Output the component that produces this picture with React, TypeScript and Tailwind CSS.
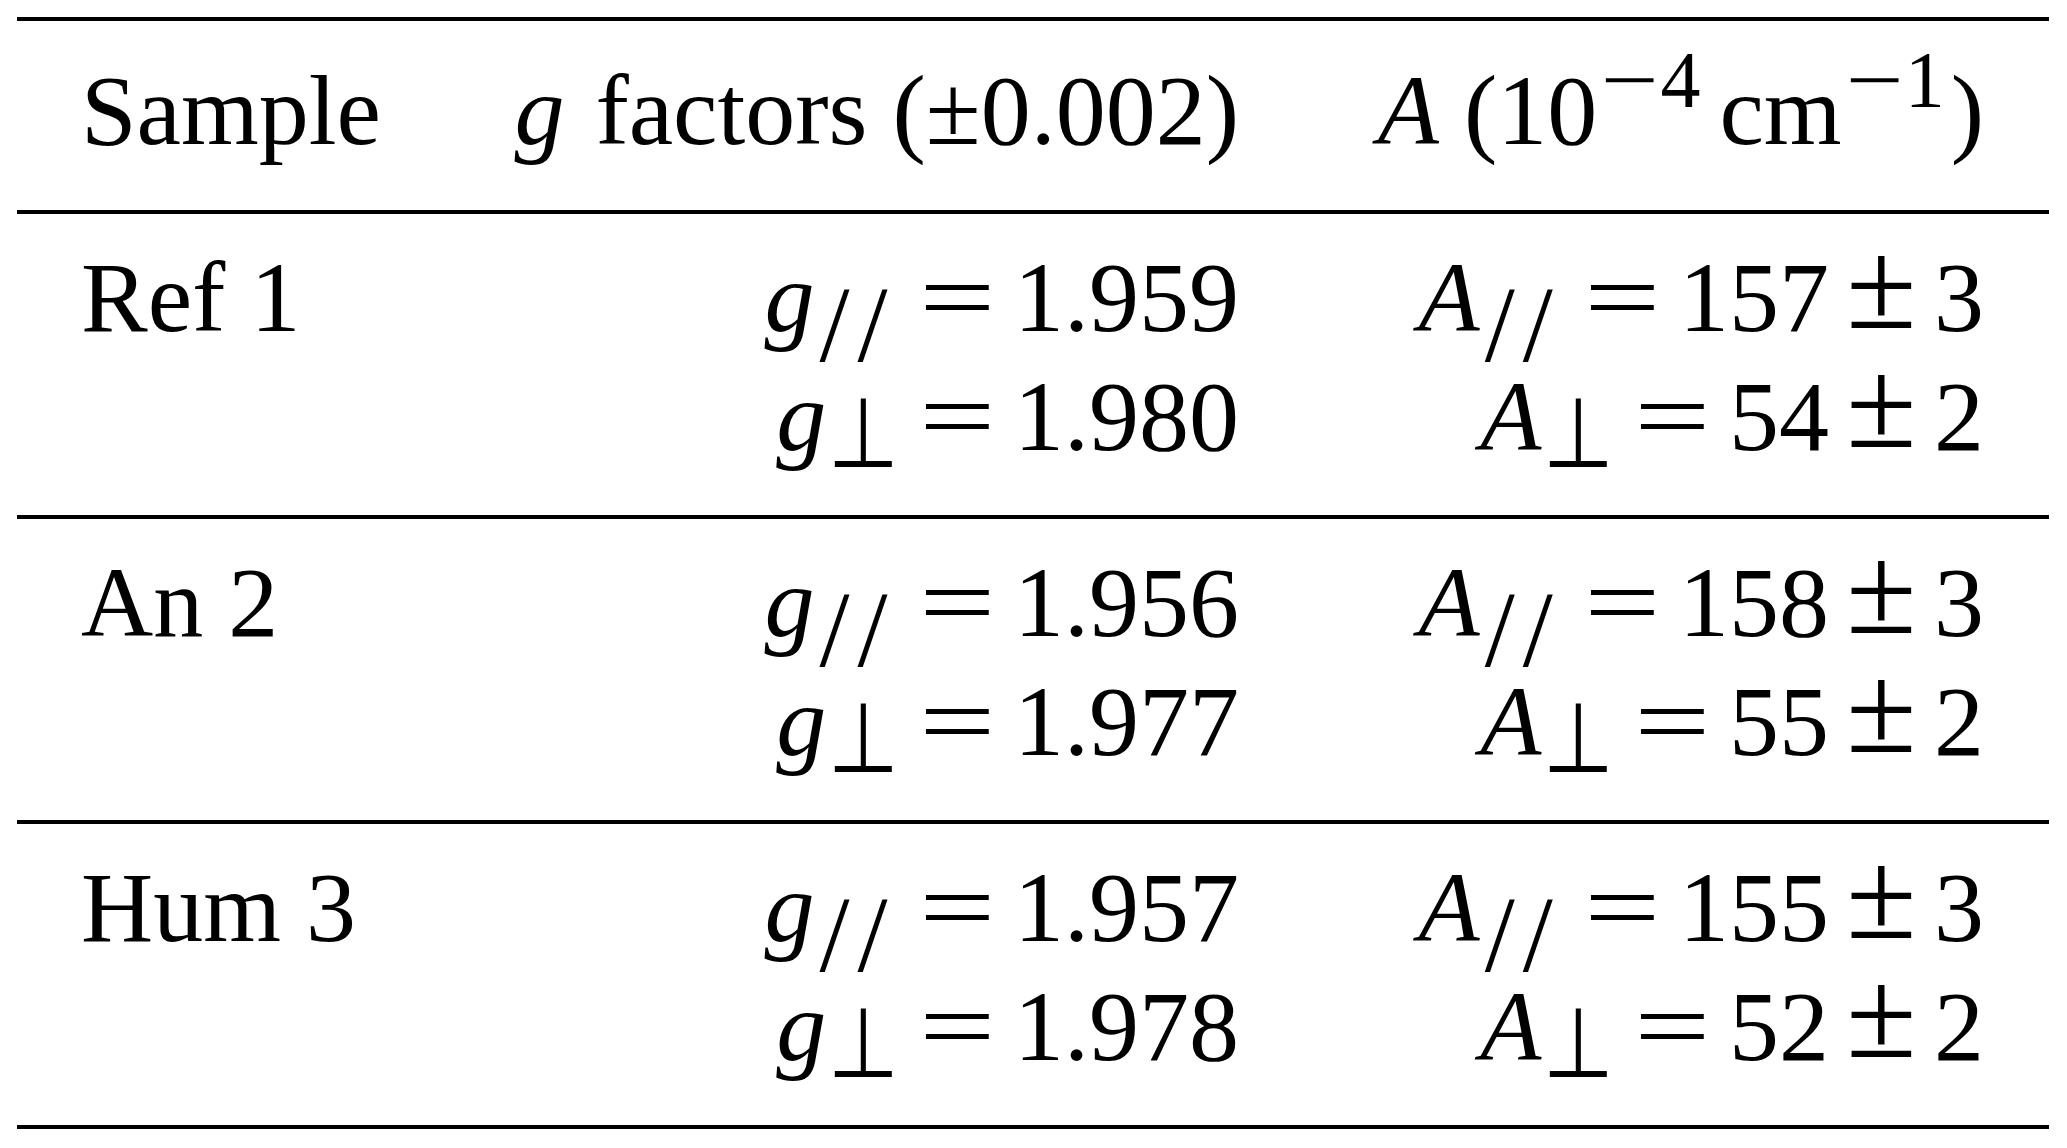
const rows = [
  { name: "Ref 1", g: ["1.959", "1.980"], a: [["157", "3"], ["54", "2"]] },
  { name: "An 2", g: ["1.956", "1.977"], a: [["158", "3"], ["55", "2"]] },
  { name: "Hum 3", g: ["1.957", "1.978"], a: [["155", "3"], ["52", "2"]] },
];

function Rule() {
  return <div className="h-[4px] bg-black" />;
}

function Par() {
  return <span className="ml-[5px] align-[-30px] text-[108px] leading-[0] tracking-[8px]">//</span>;
}

function Perp() {
  return (
    <span className="ml-[5px] inline-block origin-bottom scale-x-[1.1] scale-y-[1.32] align-[-9px] font-['DejaVu_Sans',sans-serif] text-[74px] leading-[0]">
      ⊥
    </span>
  );
}

function Eq() {
  return <span className="ml-[33px] mr-[29px] inline-block scale-x-[1.35] leading-[90px]">=</span>;
}

function Pm() {
  return <span className="mx-[25px] inline-block origin-bottom scale-[1.28] leading-[90px]">±</span>;
}

function Sup({ n, className }: { n: string; className: string }) {
  return (
    <span className={`align-[37px] text-[80px] leading-[0] ${className}`}>
      <span className="inline-block scale-x-[1.28]">−</span>
      <span className="ml-[8px]">{n}</span>
    </span>
  );
}

export default function App() {
  return (
    <div className="min-h-[1148px] w-[2067px] bg-white pt-[17px] font-['Liberation_Serif','Times_New_Roman',serif] text-[100px] text-black">
      <div className="ml-[17px] w-[2032px]">
        <Rule />
        <div className="flex h-[189px] pl-[64px] pr-[65px] pt-[30px] leading-[119px]">
          <div className="w-[300px] shrink-0 whitespace-nowrap">Sample</div>
          <div className="flex-1 whitespace-nowrap text-right">
            <span className="mr-[6px] italic">g</span> factors (±0.002)
          </div>
          <div className="w-[745px] shrink-0 whitespace-nowrap text-right">
            <span className="italic">A</span> (10
            <Sup n="4" className="ml-[10px]" />
            <span className="ml-[19px] mr-[10px]">cm</span>
            <Sup n="1" className="mr-[6px]" />)
          </div>
        </div>
        <Rule />
        {rows.map((r) => (
          <div key={r.name}>
            <div className="flex h-[301px] pl-[64px] pr-[65px] pt-[24px] leading-[119px]">
              <div className="w-[300px] shrink-0 whitespace-nowrap">{r.name}</div>
              <div className="flex flex-1 flex-col items-end whitespace-nowrap">
                <div>
                  <span className="italic">g</span>
                  <Par />
                  <Eq />
                  {r.g[0]}
                </div>
                <div>
                  <span className="italic">g</span>
                  <Perp />
                  <Eq />
                  {r.g[1]}
                </div>
              </div>
              <div className="flex w-[745px] shrink-0 flex-col items-end whitespace-nowrap">
                <div>
                  <span className="italic">A</span>
                  <Par />
                  <Eq />
                  {r.a[0][0]}
                  <Pm />
                  {r.a[0][1]}
                </div>
                <div>
                  <span className="italic">A</span>
                  <Perp />
                  <Eq />
                  {r.a[1][0]}
                  <Pm />
                  {r.a[1][1]}
                </div>
              </div>
            </div>
            <Rule />
          </div>
        ))}
      </div>
    </div>
  );
}
